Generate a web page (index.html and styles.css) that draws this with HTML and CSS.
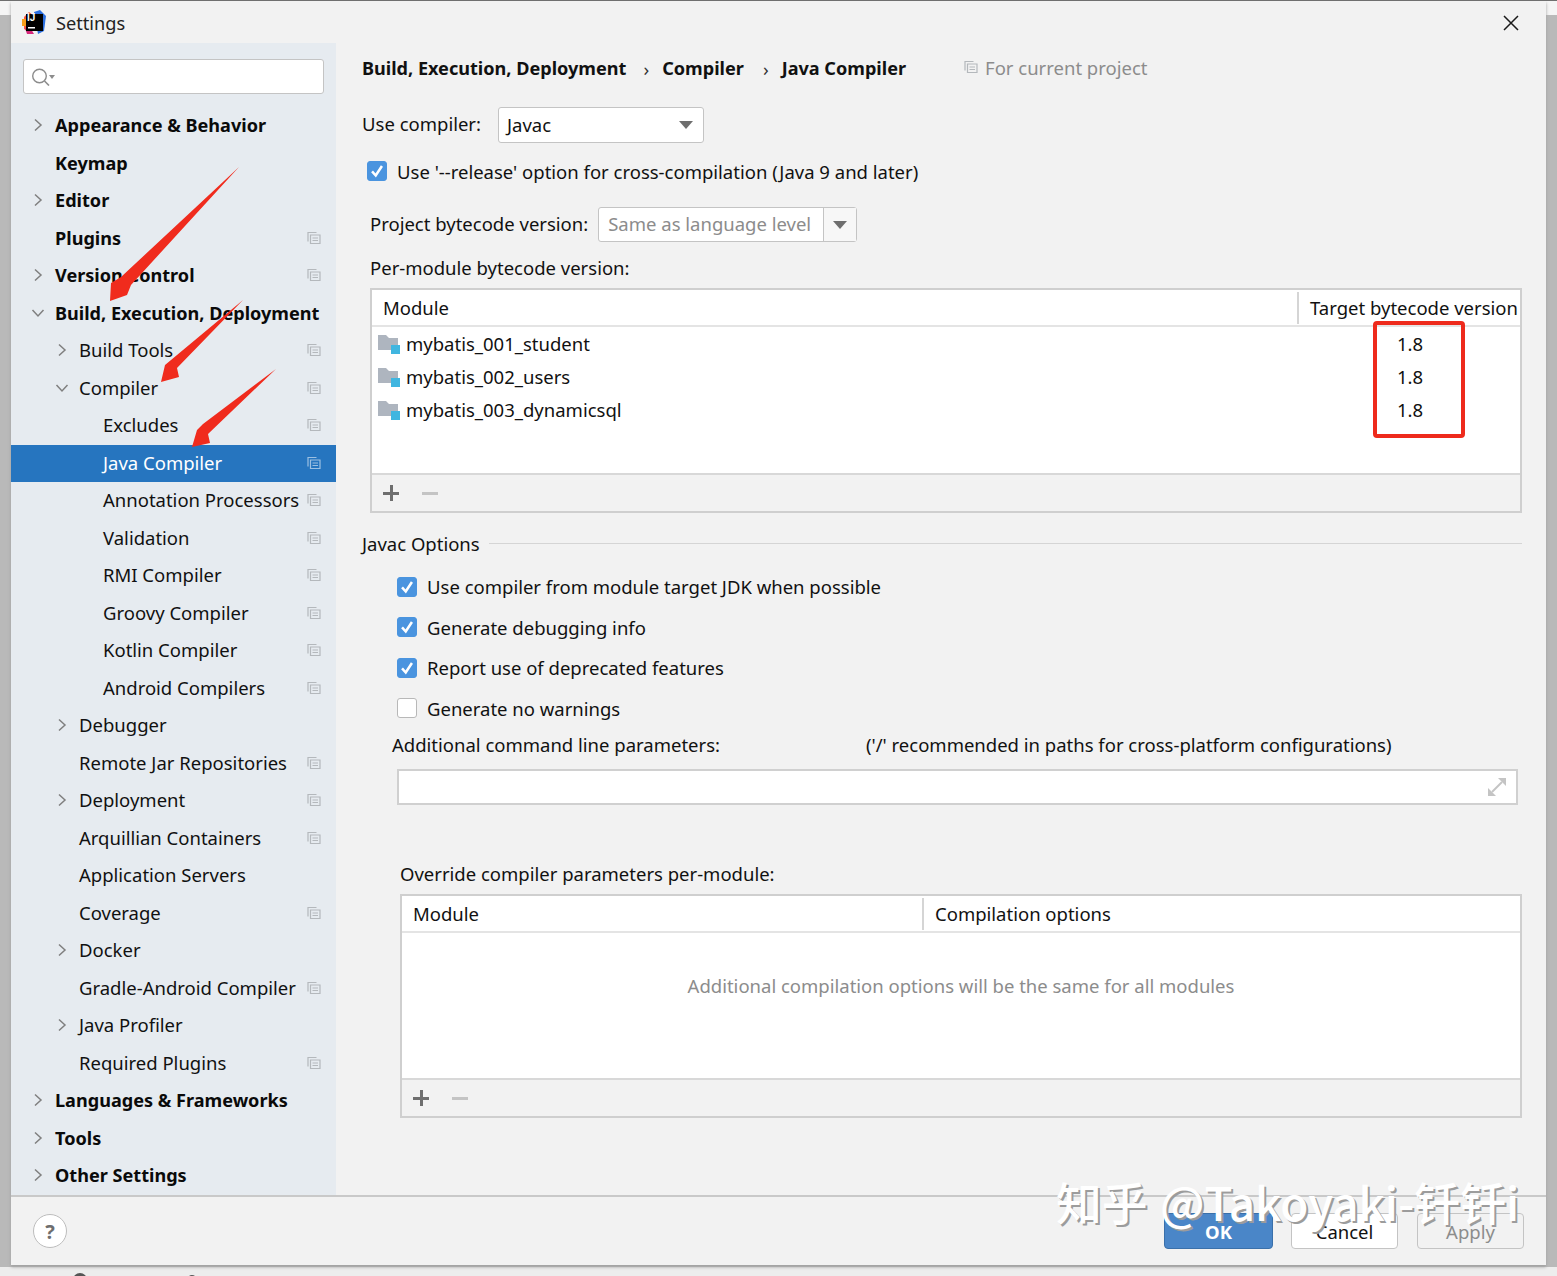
FILE: index.html
```html
<!DOCTYPE html>
<html lang="en">
<head>
<meta charset="utf-8">
<title>Settings</title>
<link rel="stylesheet" href="styles.css">
</head>
<body>
<svg width="0" height="0" class="defs">
  <symbol id="copy" viewBox="0 0 14 14"><path d="M1 10.5V1.5h8.5M3.5 12.5V4h9.5v8.5z M5.5 7h5.5M5.5 9.5h5.5" fill="none" stroke="currentColor" stroke-width="1.2"/></symbol>
  <symbol id="right" viewBox="0 0 10 14"><path d="M2 1.5 8 7 2 12.5" fill="none" stroke="currentColor" stroke-width="1.5"/></symbol>
  <symbol id="down" viewBox="0 0 14 10"><path d="M1.5 2 7 8 12.5 2" fill="none" stroke="currentColor" stroke-width="1.5"/></symbol>
  <symbol id="check" viewBox="0 0 20 20"><path d="M4.5 10.5 8.6 15 15.5 4.5" fill="none" stroke="#fff" stroke-width="2.8"/></symbol>
  <symbol id="folder" viewBox="0 0 23 20"><path d="M0 1h8l3 3h9v12H0z" fill="#aeb5bf"/><rect x="13" y="11" width="9" height="9" fill="#40b6e0"/></symbol>
</svg>
<div class="page">
  <div class="window">
    <header class="titlebar">
      <svg class="logo" viewBox="0 0 24 25" width="24" height="25">
        <path d="M2 7 7 2l4 3-4 17-5-3z" fill="#fc5a3e"/>
        <path d="M0 9h5v7H0z" fill="#f9a01b"/>
        <path d="M12 2l6-2 6 6-2 15-6 3z" fill="#2b6fe0"/>
        <path d="M3 18l6 1 3 5-7 0z" fill="#d6277b"/>
        <rect x="4" y="4" width="17" height="17" fill="#000"/>
        <rect x="6" y="17" width="7" height="1.5" fill="#fff"/>
      </svg>
      <span class="logo-text">IJ</span>
      <span class="title">Settings</span>
      <svg class="close" viewBox="0 0 16 16" width="16" height="16"><path d="M1 1 15 15M15 1 1 15" stroke="#1a1a1a" stroke-width="1.5"/></svg>
    </header>
    <div class="main">
      <aside class="sidebar">
        <div class="search">
          <svg viewBox="0 0 24 18" width="24" height="18"><circle cx="7.5" cy="8" r="6.8" fill="none" stroke="#8c8c8c" stroke-width="1.4"/><path d="M12.5 13 17 17.5" stroke="#8c8c8c" stroke-width="1.6"/><path d="M17 7h6l-3 4z" fill="#8c8c8c"/></svg>
        </div>
        <nav class="tree">
          <div class="row l0 b"><svg class="chev"><use href="#right"/></svg><span>Appearance &amp; Behavior</span></div>
          <div class="row l0 b"><span>Keymap</span></div>
          <div class="row l0 b"><svg class="chev"><use href="#right"/></svg><span>Editor</span></div>
          <div class="row l0 b"><span>Plugins</span><svg class="copy"><use href="#copy"/></svg></div>
          <div class="row l0 b"><svg class="chev"><use href="#right"/></svg><span>Version Control</span><svg class="copy"><use href="#copy"/></svg></div>
          <div class="row l0 b"><svg class="chev wide"><use href="#down"/></svg><span>Build, Execution, Deployment</span></div>
          <div class="row l1"><svg class="chev"><use href="#right"/></svg><span>Build Tools</span><svg class="copy"><use href="#copy"/></svg></div>
          <div class="row l1"><svg class="chev wide"><use href="#down"/></svg><span>Compiler</span><svg class="copy"><use href="#copy"/></svg></div>
          <div class="row l2"><span>Excludes</span><svg class="copy"><use href="#copy"/></svg></div>
          <div class="row l2 selected"><span>Java Compiler</span><svg class="copy"><use href="#copy"/></svg></div>
          <div class="row l2"><span>Annotation Processors</span><svg class="copy"><use href="#copy"/></svg></div>
          <div class="row l2"><span>Validation</span><svg class="copy"><use href="#copy"/></svg></div>
          <div class="row l2"><span>RMI Compiler</span><svg class="copy"><use href="#copy"/></svg></div>
          <div class="row l2"><span>Groovy Compiler</span><svg class="copy"><use href="#copy"/></svg></div>
          <div class="row l2"><span>Kotlin Compiler</span><svg class="copy"><use href="#copy"/></svg></div>
          <div class="row l2"><span>Android Compilers</span><svg class="copy"><use href="#copy"/></svg></div>
          <div class="row l1"><svg class="chev"><use href="#right"/></svg><span>Debugger</span></div>
          <div class="row l1"><span>Remote Jar Repositories</span><svg class="copy"><use href="#copy"/></svg></div>
          <div class="row l1"><svg class="chev"><use href="#right"/></svg><span>Deployment</span><svg class="copy"><use href="#copy"/></svg></div>
          <div class="row l1"><span>Arquillian Containers</span><svg class="copy"><use href="#copy"/></svg></div>
          <div class="row l1"><span>Application Servers</span></div>
          <div class="row l1"><span>Coverage</span><svg class="copy"><use href="#copy"/></svg></div>
          <div class="row l1"><svg class="chev"><use href="#right"/></svg><span>Docker</span></div>
          <div class="row l1"><span>Gradle-Android Compiler</span><svg class="copy"><use href="#copy"/></svg></div>
          <div class="row l1"><svg class="chev"><use href="#right"/></svg><span>Java Profiler</span></div>
          <div class="row l1"><span>Required Plugins</span><svg class="copy"><use href="#copy"/></svg></div>
          <div class="row l0 b"><svg class="chev"><use href="#right"/></svg><span>Languages &amp; Frameworks</span></div>
          <div class="row l0 b"><svg class="chev"><use href="#right"/></svg><span>Tools</span></div>
          <div class="row l0 b"><svg class="chev"><use href="#right"/></svg><span>Other Settings</span></div>
        </nav>
      </aside>
      <section class="content">
        <div class="crumbs">
          <b>Build, Execution, Deployment</b><i class="sep">›</i><b>Compiler</b><i class="sep">›</i><b>Java Compiler</b>
          <span class="scope"><svg class="copy"><use href="#copy"/></svg>For current project</span>
        </div>
        <div class="compiler-row">
          <label>Use compiler:</label>
          <div class="combo"><span>Javac</span><em class="tri"></em></div>
        </div>
        <div class="check-row top"><span class="cb on"><svg><use href="#check"/></svg></span><span>Use '--release' option for cross-compilation (Java 9 and later)</span></div>
        <div class="bytecode-row">
          <label>Project bytecode version:</label>
          <div class="combo2"><span>Same as language level</span><div class="arrow"><em class="tri"></em></div></div>
        </div>
        <div class="per-label">Per-module bytecode version:</div>
        <div class="table t1">
          <div class="thead">
            <div class="th grow">Module</div>
            <div class="th target">Target bytecode version</div>
          </div>
          <div class="tbody">
            <div class="tr"><svg class="folder"><use href="#folder"/></svg><span class="grow">mybatis_001_student</span><span class="ver">1.8</span></div>
            <div class="tr"><svg class="folder"><use href="#folder"/></svg><span class="grow">mybatis_002_users</span><span class="ver">1.8</span></div>
            <div class="tr"><svg class="folder"><use href="#folder"/></svg><span class="grow">mybatis_003_dynamicsql</span><span class="ver">1.8</span></div>
          </div>
          <div class="tools"><span class="plus"></span><span class="minus"></span></div>
        </div>
        <div class="group"><span>Javac Options</span><hr></div>
        <div class="options">
          <div class="check-row"><span class="cb on"><svg><use href="#check"/></svg></span><span>Use compiler from module target JDK when possible</span></div>
          <div class="check-row"><span class="cb on"><svg><use href="#check"/></svg></span><span>Generate debugging info</span></div>
          <div class="check-row"><span class="cb on"><svg><use href="#check"/></svg></span><span>Report use of deprecated features</span></div>
          <div class="check-row"><span class="cb"></span><span>Generate no warnings</span></div>
        </div>
        <div class="params">
          <span class="p1">Additional command line parameters:</span>
          <span>('/' recommended in paths for cross-platform configurations)</span>
        </div>
        <div class="field">
          <svg viewBox="0 0 20 20" width="20" height="20"><path d="M11 1h8v8zM1 19v-8l8 8z" fill="#c4c4c4"/><path d="M15 5 5 15" stroke="#c4c4c4" stroke-width="2"/></svg>
        </div>
        <div class="override-label">Override compiler parameters per-module:</div>
        <div class="table t2">
          <div class="thead">
            <div class="th mod2">Module</div>
            <div class="th grow">Compilation options</div>
          </div>
          <div class="empty">Additional compilation options will be the same for all modules</div>
          <div class="tools"><span class="plus"></span><span class="minus"></span></div>
        </div>
      </section>
    </div>
    <footer class="footer">
      <div class="help">?</div>
      <div class="btns">
        <button class="btn ok">OK</button>
        <button class="btn cancel">Cancel</button>
        <button class="btn apply">Apply</button>
      </div>
    </footer>
  </div>
  <svg class="arrows" viewBox="0 0 1557 1276" width="1557" height="1276">
    <g fill="#f02b1d">
      <path d="M239 167 131 285 127 295 110 301 111 283 121 277z"/>
      <path d="M243 300 177 368 179 377 161 382 165 365 171 360z"/>
      <path d="M276 369 208 434 210 443 192 447 197 430 203 424z"/>
    </g>
  </svg>
  <div class="redbox"></div>
  <div class="mark">知乎 @Takoyaki-钎钎i</div>
  <div class="scrap"></div>
</div>
</body>
</html>
```
FILE: styles.css
```css
* { box-sizing: border-box; }
html, body { margin: 0; padding: 0; }
body { font-family: "Noto Sans", "Open Sans", sans-serif; font-size: 18.5px; color: #111; background: #f5f5f5; overflow: hidden; }
.defs { position: absolute; }
.page { position: relative; width: 1557px; height: 1276px; padding: 1px 11px 10px; border-top: 1px solid #6f6f6f; overflow: hidden; background: linear-gradient(#f5f5f5 0, #f5f5f5 14px, #b9b9b9 14px, #b9b9b9 1266px, #ededed 1266px); }
.window { height: 100%; margin-top: -1px; display: flex; flex-direction: column; background: #f2f2f2; box-shadow: 0 2px 3px #a0a0a0; }
.titlebar { position: relative; height: 42px; flex: none; display: flex; align-items: center; padding: 2px 0 0 11px; }
.logo { flex: none; margin-top: -2px; }
.logo-text { position: absolute; left: 16px; top: 11px; font: bold 10px/12px "Liberation Sans", sans-serif; color: #fff; }
.title { margin-left: 10px; font-size: 18.2px; color: #222; }
.close { margin-left: auto; margin-right: 27px; }
.main { flex: 1; display: flex; min-height: 0; }
.sidebar { width: 325px; flex: none; background: #e6ebf0; padding-top: 16px; }
.search { height: 35px; margin: 0 12px; background: #fff; border: 1px solid #c4c4c4; border-radius: 3px; display: flex; align-items: center; padding-left: 8px; }
.tree { margin-top: 13px; }
.row { height: 37.5px; display: flex; align-items: center; position: relative; white-space: nowrap; color: #111; padding-bottom: 2px; }
.row.b { font-weight: 700; font-size: 18.1px; color: #0a0a0a; padding-bottom: 1px; }
.l0 { padding-left: 44px; }
.l1 { padding-left: 68px; }
.l2 { padding-left: 92px; }
.chev { position: absolute; width: 10px; height: 14px; color: #7f7f7f; top: 11px; }
.chev.wide { width: 14px; height: 10px; top: 13px; }
.l0 .chev { left: 22px; }
.l1 .chev { left: 46px; }
.l0 .chev.wide { left: 20px; }
.l1 .chev.wide { left: 44px; }
.copy { width: 14px; height: 14px; color: #b4b8bc; flex: none; }
.row .copy { position: absolute; left: 296px; top: 11px; }
.selected { background: #2675bf; color: #fff; }
.selected .copy { color: #9cc0e2; }
.content { flex: 1; min-width: 0; padding-left: 26px; padding-right: 24px; }
.crumbs { height: 50px; display: flex; align-items: center; white-space: nowrap; }
.crumbs b { font-weight: 700; font-size: 18.1px; color: #111; }
.sep { font-style: normal; margin: 0 13px 0 17px; color: #333; }
.sep + b + .sep { margin-left: 19px; }
.scope { margin-left: 58px; padding-bottom: 2px; color: #8c8c8c; display: flex; align-items: center; gap: 7px; }
.compiler-row { display: flex; align-items: center; margin-top: 14px; gap: 17px; }
.compiler-row label { padding-bottom: 3px; }
.combo { width: 206px; height: 36px; background: #fff; border: 1px solid #c4c4c4; border-radius: 3px; display: flex; align-items: center; justify-content: space-between; padding: 0 10px 1px 8px; }
.tri { display: block; width: 0; height: 0; border-left: 7px solid transparent; border-right: 7px solid transparent; border-top: 8px solid #6e6e6e; }
.check-row { display: flex; align-items: center; height: 40.5px; gap: 10px; white-space: nowrap; }
.check-row.top { margin: 8px 0 0 5px; height: 40px; }
.cb { width: 20px; height: 20px; flex: none; border-radius: 3px; background: #fff; border: 1px solid #b8b8b8; display: block; }
.cb.on { background: #4a94df; border-color: #4a94df; }
.cb svg { display: block; width: 18px; height: 18px; }
.bytecode-row { display: flex; align-items: center; margin: 16px 0 0 8px; gap: 10px; }
.bytecode-row label { padding-bottom: 2px; }
.combo2 { width: 259px; height: 35px; display: flex; align-items: center; background: #fff; border: 1px solid #c4c4c4; border-radius: 3px; color: #8c8c8c; padding-left: 9px; }
.combo2 span { flex: 1; padding-bottom: 2px; }
.arrow { width: 33px; height: 100%; border-left: 1px solid #c4c4c4; background: #f7f7f7; display: flex; align-items: center; justify-content: center; }
.per-label { margin: 8px 0 0 8px; height: 34px; display: flex; align-items: center; }
.table { background: #fff; border: 2px solid #cfcfcf; display: flex; flex-direction: column; }
.t1 { height: 225px; margin: 4px 0 0 8px; }
.thead { height: 37px; flex: none; display: flex; border-bottom: 2px solid #e4e4e4; }
.th { display: flex; align-items: center; white-space: nowrap; }
.grow { flex: 1; }
.t1 .th.grow { padding-left: 11px; }
.target { width: 223px; padding-left: 13px; position: relative; }
.target::before, .t2 .th.grow::before { content: ""; position: absolute; left: 0; top: 2px; bottom: 1px; width: 2px; background: #d5d5d5; }
.tbody { flex: 1; }
.tr { display: flex; align-items: center; height: 33px; padding-left: 6px; }
.folder { width: 23px; height: 20px; margin-right: 5px; flex: none; }
.ver { width: 107px; margin-right: 16px; text-align: left; }
.tools { height: 38px; flex: none; background: #f2f2f2; border-top: 2px solid #d8d8d8; display: flex; align-items: center; padding-left: 11px; gap: 23px; }
.plus, .minus { width: 16px; height: 3px; background: #6e6e6e; position: relative; display: block; }
.plus::after { content: ""; position: absolute; left: 6.5px; top: -6.5px; width: 3px; height: 16px; background: #6e6e6e; }
.minus { background: #c4c4c4; }
.group { display: flex; align-items: center; gap: 9px; margin-top: 13px; height: 34px; }
.group hr { flex: 1; height: 1px; margin: 0; border: 0; background: #d5d5d5; }
.options { margin: 6.5px 0 0 35px; }
.options .check-row { height: 40.5px; }
.params { margin: -1.5px 0 0 30px; height: 34px; display: flex; align-items: center; white-space: nowrap; }
.p1 { width: 474px; }
.field { margin: 8px 4px 0 35px; height: 36px; background: #fff; border: 2px solid #d0d0d0; display: flex; align-items: center; justify-content: flex-end; padding-right: 9px; }
.override-label { margin: 51px 0 0 38px; height: 34px; display: flex; align-items: center; }
.t2 { height: 224px; margin: 4px 0 0 38px; position: relative; }
.mod2 { width: 520px; padding-left: 11px; }
.t2 .th.grow { padding-left: 13px; position: relative; }
.empty { flex: 1; display: flex; align-items: center; justify-content: center; color: #8c8c8c; padding-bottom: 41px; }
.footer { height: 70px; flex: none; border-top: 2px solid #c9c9c9; display: flex; align-items: center; padding: 0 22px; justify-content: space-between; }
.help { width: 34px; height: 34px; border-radius: 50%; background: #fff; border: 1px solid #bdbdbd; color: #6e6e6e; font-weight: 700; font-size: 20px; display: flex; align-items: center; justify-content: center; }
.btns { display: flex; gap: 18px; margin-right: 0; }
.btn { width: 107px; height: 36px; border-radius: 4px; font: inherit; padding: 0; border: 1px solid #c4c4c4; background: #fff; color: #111; }
.ok { width: 109px; background: #4a86c8; border-color: #3a70aa; color: #fff; font-weight: 700; }
.apply { margin-left: 1px; background: #f2f2f2; color: #8c8c8c; }
.arrows { position: absolute; left: 0; top: -1px; pointer-events: none; }
.redbox { position: absolute; left: 1373px; top: 320px; width: 92px; height: 117px; border: 4px solid #ee2a1c; border-radius: 4px; }
.mark { position: absolute; left: 1056px; top: 1170px; font-family: "Noto Sans CJK SC", "Noto Sans", sans-serif; font-size: 45.8px; font-weight: 500; word-spacing: 2px; line-height: 60px; color: #fff; text-shadow: 2px 2px 0 #9c9c9c; white-space: nowrap; }
.scrap { position: absolute; left: 73px; top: 1272px; width: 14px; height: 14px; border-radius: 50%; background: #555; box-shadow: 112px 0 0 -2px #555; }
```
